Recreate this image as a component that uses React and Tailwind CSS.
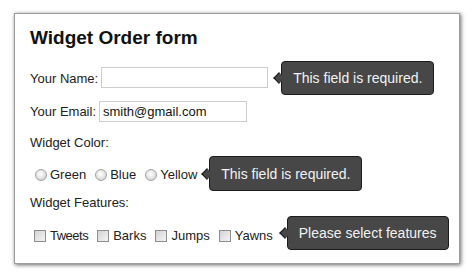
import React from "react";

function Tip({ children, className = "" }) {
  return (
    <div
      className={
        "relative flex h-[34px] shrink-0 items-center whitespace-nowrap rounded-[4px] border border-[#1c1c1c] bg-[#474747] px-[11px] text-[14px] leading-4 text-[#f2f2f2] " +
        className
      }
    >
      <span className="absolute left-[-7px] top-1/2 -mt-[4px] h-[8px] w-[8px] rotate-45 border-b border-l border-[#1c1c1c] bg-[#474747]" />
      <span className="relative">{children}</span>
    </div>
  );
}

function Radio({ label }) {
  return (
    <span className="flex items-center gap-[3px]">
      <span className="h-[12px] w-[12px] rounded-full border border-[#a3a3a3] bg-[radial-gradient(circle_at_45%_40%,#ffffff_0%,#e8e8e8_45%,#c4c4c4_100%)]" />
      <span>{label}</span>
    </span>
  );
}

function Check({ label, className = "" }) {
  return (
    <span className="flex items-center gap-[4px]">
      <span className="h-[12px] w-[12px] border border-[#8e8e8e] bg-[linear-gradient(135deg,#d4d4d4,#f4f4f4)]" />
      <span className={className}>{label}</span>
    </span>
  );
}

export default function App() {
  return (
    <div
      className="h-[278px] w-[474px] bg-white pl-[14px] pt-[13px] text-[13px] text-[#222]"
      style={{ fontFamily: '"Liberation Sans", Arial, sans-serif' }}
    >
      <div className="flex h-[251px] w-[446px] flex-col border border-[#9c9c9c] bg-white pl-[15px] pt-[13px] shadow-[1px_1px_4px_rgba(0,0,0,0.6)]">
        <h1 className="h-[22px] text-[19px] font-bold leading-[22px] text-[#111]">
          Widget Order form
        </h1>

        <div className="mt-[18px] flex h-[21px] items-center">
          <span className="mt-[2px] leading-4">Your Name:</span>
          <input
            readOnly
            value=""
            className="ml-[3px] h-[21px] w-[167px] border border-[#cdcdcd] px-[3px] text-[13px] leading-4 text-[#111] outline-none"
          />
          <Tip className="ml-[13px]">This field is required.</Tip>
        </div>

        <div className="mt-[13px] flex h-[21px] items-center">
          <span className="leading-4">Your Email:</span>
          <input
            readOnly
            value="smith@gmail.com"
            className="ml-[3px] h-[21px] w-[148px] border border-[#cdcdcd] px-[3px] text-[13px] leading-4 text-[#111] outline-none"
          />
        </div>

        <div className="mt-[13px] h-4 leading-4">Widget Color:</div>

        <div className="mt-[16px] flex h-4 items-center gap-[9px] pl-[5px] leading-4">
          <Radio label="Green" />
          <Radio label="Blue" />
          <Radio label="Yellow" />
          <Tip className="mb-[3px] ml-[3px] h-[35px]">This field is required.</Tip>
        </div>

        <div className="mt-[12px] h-4 leading-4">Widget Features:</div>

        <div className="mt-[17px] flex h-4 items-center gap-[9px] pl-[4px] leading-4">
          <Check label="Tweets" className="tracking-[-0.5px]" />
          <Check label="Barks" />
          <Check label="Jumps" />
          <Check label="Yawns" />
          <Tip className="mb-[6px] ml-[5px]">Please select features</Tip>
        </div>
      </div>
    </div>
  );
}
